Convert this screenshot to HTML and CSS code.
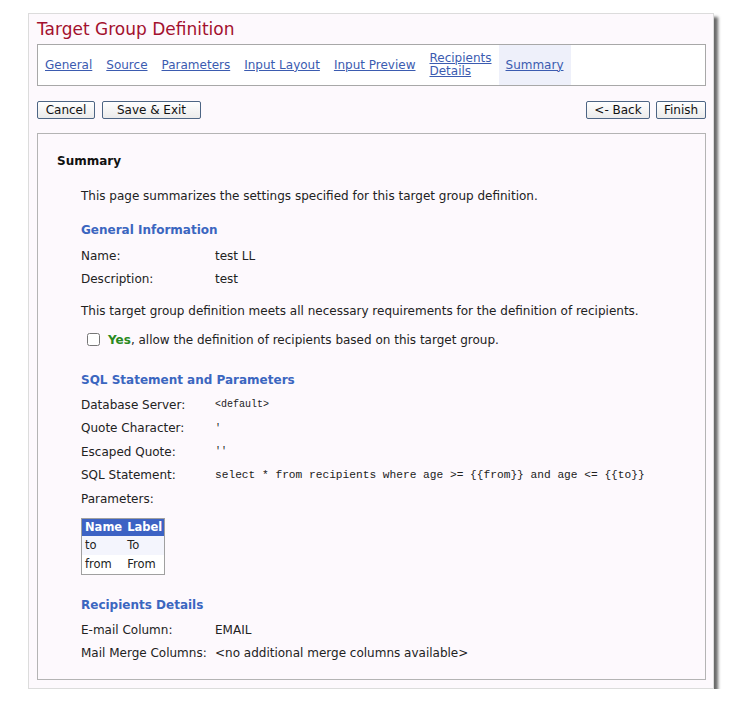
FILE: index.html
```html
<!DOCTYPE html>
<html lang="en">
<head>
  <meta charset="UTF-8" />
  <title>Target Group Definition</title>
  <link rel="stylesheet" href="styles.css">
</head>
<body>
  <div class="panel">
    <h1 class="titulo">Target Group Definition</h1>

    <nav class="pasos">
      <a href="#">General</a>
      <a href="#">Source</a>
      <a href="#">Parameters</a>
      <a href="#">Input Layout</a>
      <a href="#">Input Preview</a>
      <a href="#">Recipients<br />Details</a>
      <a href="#" class="actual">Summary</a>
    </nav>

    <div class="botonera">
      <div class="grupo">
        <button class="boton cancelar">Cancel</button>
        <button class="boton guardar">Save &amp; Exit</button>
      </div>
      <div class="grupo">
        <button class="boton atras">&lt;- Back</button>
        <button class="boton fin">Finish</button>
      </div>
    </div>

    <section class="contenido">
      <h2 class="seccion">Summary</h2>
      <div class="cuerpo">
        <p class="texto intro">This page summarizes the settings specified for this target group definition.</p>

        <h3 class="subtitulo">General Information</h3>
        <div class="fila"><span class="etiqueta">Name:</span><span>test LL</span></div>
        <div class="fila"><span class="etiqueta">Description:</span><span>test</span></div>

        <p class="texto requisitos">This target group definition meets all necessary requirements for the definition of recipients.</p>
        <label class="check"><input type="checkbox" /><b class="si">Yes</b>, allow the definition of recipients based on this target group.</label>

        <h3 class="subtitulo sql">SQL Statement and Parameters</h3>
        <div class="fila alta"><span class="etiqueta">Database Server:</span><span class="mono chico">&lt;default&gt;</span></div>
        <div class="fila alta"><span class="etiqueta">Quote Character:</span><span class="mono chico">'</span></div>
        <div class="fila alta"><span class="etiqueta">Escaped Quote:</span><span class="mono chico">''</span></div>
        <div class="fila alta"><span class="etiqueta">SQL Statement:</span><span class="mono">select * from recipients where age &gt;= {{from}} and age &lt;= {{to}}</span></div>
        <div class="fila alta"><span class="etiqueta">Parameters:</span></div>

        <table class="parametros">
          <tr><th class="col-nombre">Name</th><th>Label</th></tr>
          <tr class="par"><td>to</td><td>To</td></tr>
          <tr><td>from</td><td>From</td></tr>
        </table>

        <h3 class="subtitulo">Recipients Details</h3>
        <div class="fila"><span class="etiqueta">E-mail Column:</span><span>EMAIL</span></div>
        <div class="fila"><span class="etiqueta">Mail Merge Columns:</span><span>&lt;no additional merge columns available&gt;</span></div>
      </div>
    </section>
  </div>
</body>
</html>
```

FILE: styles.css
```css
body {
  font-family: 'DejaVu Sans', Verdana, sans-serif;
  font-size: 12px;
  margin: 0;
  padding: 0;
  background-color: #fff;
  color: #222;
}
.panel {
  margin: 13px 0 0 28px;
  width: 669px;
  padding: 0 7px 8px 8px;
  background-color: #fdf9fd;
  border: 1px solid #dcdcdc;
  box-shadow: 4px 4px 3px #6a6a6a;
}
.titulo {
  font-size: 17px;
  font-weight: normal;
  color: #a3102e;
  margin: 0;
  padding: 4px 0 4px 0;
  line-height: 22px;
}
.pasos {
  display: flex;
  align-items: center;
  height: 40px;
  border: 1px solid #a8a8a8;
  background-color: #fff;
}
.pasos a {
  color: #3b5bb0;
  padding: 0 7px;
  line-height: 13px;
  height: 100%;
  display: flex;
  align-items: center;
}
.pasos a.actual {
  background-color: #eef0fa;
}
.botonera {
  display: flex;
  justify-content: space-between;
  margin: 15px 0 14px 0;
}
.grupo {
  display: flex;
  gap: 6px;
}
.boton {
  font-family: 'DejaVu Sans', Verdana, sans-serif;
  font-size: 12px;
  color: #111;
  height: 18px;
  padding: 0;
  border: 1px solid #4d6584;
  border-radius: 2px;
  background: linear-gradient(#ffffff, #ebebeb);
}
.cancelar { width: 58px; }
.guardar { width: 99px; margin-left: 1px; }
.atras { width: 64px; }
.fin { width: 50px; }
.contenido {
  border: 1px solid #b4b4b4;
  padding: 19px 19px 0 19px;
  height: 526px;
}
.seccion {
  font-size: 12px;
  line-height: 16px;
  font-weight: bold;
  color: #111;
  margin: 0 0 19px 0;
}
.cuerpo {
  padding-left: 24px;
}
.texto {
  line-height: 16px;
  margin: 0;
}
.intro {
  margin-bottom: 18px;
}
.requisitos {
  margin: 13px 0 13px 0;
}
.subtitulo {
  font-size: 12px;
  line-height: 16px;
  font-weight: bold;
  color: #3b66c0;
  margin: 0 0 6px 0;
}
.subtitulo.sql {
  margin-top: 24px;
  margin-bottom: 5px;
}
.fila {
  display: flex;
  height: 23px;
  align-items: center;
}
.fila.alta {
  height: 23.5px;
}
.etiqueta {
  width: 134px;
}
.mono {
  font-family: 'Liberation Mono', 'Courier New', monospace;
  font-size: 11.2px;
}
.mono.chico {
  font-size: 10px;
}
.check {
  display: block;
  line-height: 16px;
  padding-left: 6px;
}
.check input {
  margin: 0 8px 0 0;
  width: 13px;
  height: 13px;
  vertical-align: -2px;
}
.si {
  color: #2a8a22;
}
.parametros {
  border-collapse: collapse;
  border: 1px solid #a0a0a0;
  margin: 7px 0 22px 0;
  background-color: #fff;
  font-size: 11.5px;
}
.parametros th {
  background-color: #3c62c4;
  color: #fff;
  text-align: left;
  padding: 0 2px 0 3px;
  height: 17px;
}
.parametros th.col-nombre {
  width: 37px;
}
.parametros td {
  padding: 0 2px 0 3px;
  height: 19px;
}
.parametros tr.par td {
  background-color: #f4f5fd;
}
```
